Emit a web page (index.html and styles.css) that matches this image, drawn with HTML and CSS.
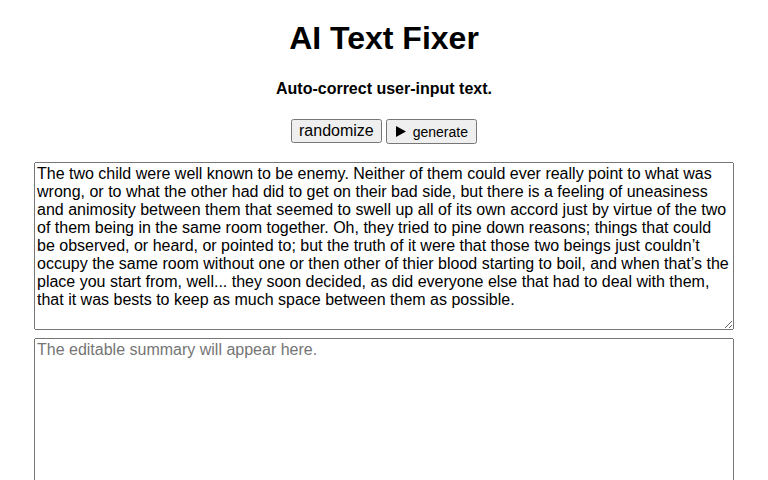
FILE: index.html
```html
<!DOCTYPE html>
<html lang="en">
<head>
    <meta charset="UTF-8">
    <meta name="viewport" content="width=device-width, initial-scale=1.0">
    <title>AI Text Fixer</title>
    <link rel="stylesheet" href="styles.css">
</head>
<body>
<h1>AI Text Fixer</h1>
<p class="subtitle">Auto-correct user-input text.</p>

<!-- Controls -->
<div class="controls">
    <button type="button" id="randomize" class="btn-random">randomize</button>
    <button type="button" id="generate" class="btn-generate">
        <svg class="play-icon" width="10" height="11" viewBox="0 0 10 11"><path d="M0 0 L10 5.5 L0 11 Z" fill="#000"/></svg>
        generate
    </button>
</div>

<!-- Input and output -->
<div class="editor">
    <textarea id="input" class="input-text">The two child were well known to be enemy. Neither of them could ever really point to what was wrong, or to what the other had did to get on their bad side, but there is a feeling of uneasiness and animosity between them that seemed to swell up all of its own accord just by virtue of the two of them being in the same room together. Oh, they tried to pine down reasons; things that could be observed, or heard, or pointed to; but the truth of it were that those two beings just couldn’t occupy the same room without one or then other of thier blood starting to boil, and when that’s the place you start from, well... they soon decided, as did everyone else that had to deal with them, that it was bests to keep as much space between them as possible.</textarea>
    <textarea id="output" class="output-text" placeholder="The editable summary will appear here."></textarea>
</div>
</body>
</html>
```

FILE: styles.css
```css
body {
    font-family: "Liberation Sans", Arial, sans-serif;
    margin: 8px;
    text-align: center;
}

h1 {
    font-size: 32px;
    margin: 12px 0 23px;
}

.subtitle {
    font-weight: bold;
    margin: 0 0 21px;
}

.controls {
    display: flex;
    justify-content: center;
    align-items: flex-start;
    gap: 4px;
    margin-bottom: 18px;
}

button {
    font-family: "Liberation Sans", Arial, sans-serif;
    display: inline-flex;
    align-items: center;
    padding: 0 6px;
    margin: 0;
}

.btn-random {
    font-size: 16px;
    height: 24px;
}

.btn-generate {
    font-size: 14px;
    height: 25px;
    padding: 0 7px 0 8px;
}

.play-icon {
    margin-right: 7px;
}

.editor {
    display: flex;
    flex-direction: column;
    align-items: center;
    gap: 8px;
}

textarea {
    width: 700px;
    box-sizing: border-box;
    font-family: "Liberation Sans", Arial, sans-serif;
    font-size: 16px;
    padding: 2px;
    margin: 0;
}

.input-text {
    height: 168px;
}

.output-text {
    height: 200px;
}
```
